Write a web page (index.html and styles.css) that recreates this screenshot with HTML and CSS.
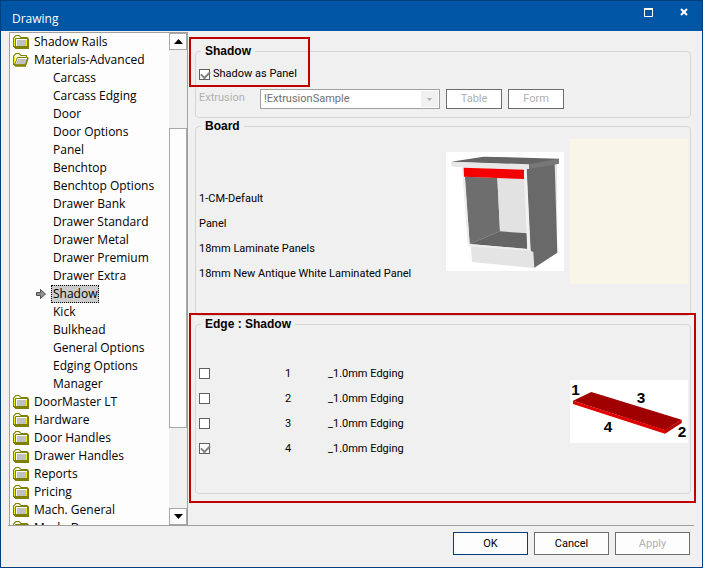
FILE: index.html
```html
<!DOCTYPE html>
<html lang="en">
<head>
<meta charset="utf-8">
<title>Drawing</title>
<link rel="stylesheet" href="styles.css">
</head>
<body>
<svg class="defs" aria-hidden="true">
  <symbol id="folder" viewBox="0 0 17 14">
    <path d="M1 12V3L3 1H6L8 3H14V12Z" fill="#f4f4d8"/>
    <path d="M1.500 4V11" stroke="#f0f000"/>
    <path d="M.5 12V2.500H1.500V1.500H2.500V.5H6.500V1.500H7.500V2.500H14.500V3.500" fill="none" stroke="#808000"/>
    <path d="M2.500 12V3.500H15.500V12" fill="#fff" stroke="#808000"/>
    <path d="M4 5H13V11H4Z" fill="#c0c0c0"/>
    <path d="M13.500 5V11" stroke="#f0f000"/>
    <path d="M1 12H16M2 13H16M15 4V13" stroke="#808000" stroke-width="2"/>
  </symbol>
  <symbol id="folder-open" viewBox="0 0 17 14">
    <path d="M1 12V3L3 1H6L8 3H13V12Z" fill="#f4f4d8"/>
    <path d="M1.500 4V11" stroke="#f0f000"/>
    <path d="M.5 12V2.500H1.500V1.500H2.500V.5H6.500V1.500H7.500V2.500H13.500V5" fill="none" stroke="#808000"/>
    <path d="M1.500 12L4.500 4.500H15L12.500 12Z" fill="#fff" stroke="#808000"/>
    <path d="M5 6H14L12 11H3Z" fill="#c0c0c0"/>
    <path d="M1 12H13M2 13H13M15 5L12.500 12" stroke="#808000" stroke-width="1.500"/>
  </symbol>
</svg>
<div class="window">
  <header class="titlebar">
    <h1>Drawing</h1>
    <button class="caption" aria-label="Maximize"><svg width="9" height="9"><path d="M.5 1H8.500V8.500H.5Z" fill="none" stroke="#fff"/><path d="M0 1H9" stroke="#fff" stroke-width="2"/></svg></button>
    <button class="caption" aria-label="Close"><svg width="8" height="8"><path d="M1 1L7 7M7 1L1 7" stroke="#fff" stroke-width="2"/></svg></button>
  </header>
  <div class="content">
    <nav class="tree">
      <ul>
        <li class="folder"><svg><use href="#folder"/></svg>Shadow Rails</li>
        <li class="folder"><svg><use href="#folder-open"/></svg>Materials-Advanced</li>
        <li class="leaf">Carcass</li>
        <li class="leaf">Carcass Edging</li>
        <li class="leaf">Door</li>
        <li class="leaf">Door Options</li>
        <li class="leaf">Panel</li>
        <li class="leaf">Benchtop</li>
        <li class="leaf">Benchtop Options</li>
        <li class="leaf">Drawer Bank</li>
        <li class="leaf">Drawer Standard</li>
        <li class="leaf">Drawer Metal</li>
        <li class="leaf">Drawer Premium</li>
        <li class="leaf">Drawer Extra</li>
        <li class="leaf current"><svg class="arrow" viewBox="0 0 10 10"><path d="M.5 3.500H4.500V.5L9.500 5L4.500 9.500V6.500H.5Z" fill="#909090" stroke="#505050"/></svg><span class="selected">Shadow</span></li>
        <li class="leaf">Kick</li>
        <li class="leaf">Bulkhead</li>
        <li class="leaf">General Options</li>
        <li class="leaf">Edging Options</li>
        <li class="leaf">Manager</li>
        <li class="folder"><svg><use href="#folder"/></svg>DoorMaster LT</li>
        <li class="folder"><svg><use href="#folder"/></svg>Hardware</li>
        <li class="folder"><svg><use href="#folder"/></svg>Door Handles</li>
        <li class="folder"><svg><use href="#folder"/></svg>Drawer Handles</li>
        <li class="folder"><svg><use href="#folder"/></svg>Reports</li>
        <li class="folder"><svg><use href="#folder"/></svg>Pricing</li>
        <li class="folder"><svg><use href="#folder"/></svg>Mach. General</li>
        <li class="folder"><svg><use href="#folder"/></svg>Mach. Door</li>
      </ul>
      <div class="scrollbar">
        <button aria-label="Scroll up"><svg width="9" height="5"><path d="M0 5L4.500 0L9 5Z"/></svg></button>
        <div class="track"><div class="thumb"></div></div>
        <button aria-label="Scroll down"><svg width="9" height="5"><path d="M0 0L4.500 5L9 0Z"/></svg></button>
      </div>
    </nav>
    <main class="panels">
      <fieldset class="group">
        <legend>Shadow</legend>
        <label class="check"><input type="checkbox" checked>Shadow as Panel</label>
        <div class="extrusion">
          <label for="extrusion">Extrusion</label>
          <div class="combo">
            <select id="extrusion" disabled><option>!ExtrusionSample</option></select>
            <span class="drop"><svg width="5" height="3"><path d="M0 0H5L2.500 3Z" fill="#b0b0b0"/></svg></span>
          </div>
          <button class="small" disabled>Table</button>
          <button class="small" disabled>Form</button>
        </div>
        <div class="mark mark-option"></div>
      </fieldset>
      <fieldset class="group board">
        <legend>Board</legend>
        <div class="columns">
          <div class="lines">
            <p>1-CM-Default</p>
            <p>Panel</p>
            <p>18mm Laminate Panels</p>
            <p>18mm New Antique White Laminated Panel</p>
          </div>
          <svg class="cabinet" viewBox="33 36 354 357" role="img" aria-label="Cabinet">
            <path d="M33 36H387V393H33Z" fill="#fff"/>
            <path d="M82 80L275 84L366 70L367 338L297 384L111 366L108 320L99 318Z" fill="#e4e4e4"/>
            <path d="M274 84L359 70L367 338L298 383L295 336L286 332Z" fill="#696969"/>
            <path d="M90 110L187 114L195 274L104 312Z" fill="#6e6e6e"/>
            <path d="M187 114L270 117L277 280L195 274Z" fill="#e2e2e2"/>
            <path d="M195 274L277 280V327L104 312Z" fill="#656565"/>
            <path d="M266 86L275 86L287 334L277 331Z" fill="#f2f2f2"/>
            <path d="M81 82L87 82L104 312L277 327V332L99 319Z" fill="#eee"/>
            <path d="M86 83L267 89V117L87 110Z" fill="#f50000"/>
            <path d="M48 65L146 50L372 56L371 60L282 75Z" fill="#646464"/>
            <path d="M282 73L372 56V71L282 87Z" fill="#777"/>
            <path d="M48 65L282 73V87L49 80Z" fill="#e8e8e8"/>
          </svg>
          <div class="swatch"></div>
        </div>
      </fieldset>
      <fieldset class="group edge">
        <legend>Edge : Shadow</legend>
        <div class="columns">
          <div class="edges">
            <label class="row"><input type="checkbox"><span>1</span><span>_1.0mm Edging</span></label>
            <label class="row"><input type="checkbox"><span>2</span><span>_1.0mm Edging</span></label>
            <label class="row"><input type="checkbox"><span>3</span><span>_1.0mm Edging</span></label>
            <label class="row"><input type="checkbox" checked><span>4</span><span>_1.0mm Edging</span></label>
          </div>
          <svg class="plank" viewBox="30 30 354 189" role="img" aria-label="Numbered panel edges">
            <path d="M30 30H384V219H30Z" fill="#fff"/>
            <path d="M39 92L94 66L365 149L315 181Z" fill="#a00000"/>
            <path d="M39 92L315 180V191L39 102Z" fill="#e00000"/>
            <path d="M315 180L365 149V159L315 191Z" fill="#b80000"/>
            <g class="digits"><text x="34" y="75">1</text><text x="353" y="202">2</text><text x="230" y="98">3</text><text x="131" y="185">4</text></g>
          </svg>
        </div>
        <div class="mark mark-edge"></div>
      </fieldset>
    </main>
  </div>
  <footer class="actions">
    <button class="primary">OK</button>
    <button>Cancel</button>
    <button disabled>Apply</button>
  </footer>
</div>
</body>
</html>
```
FILE: styles.css
```css
* { box-sizing: border-box; }
body { margin: 0; font: 12px/16px "Open Sans", "Noto Sans", sans-serif; color: #000; }
button { font: inherit; padding: 0; }
.defs { position: absolute; width: 0; height: 0; }
.window { display: flex; flex-direction: column; height: 100vh; background: #f0f0f0; border: 1px solid #003f7d; }
.titlebar { flex: none; display: flex; align-items: center; height: 30px; padding: 0 8px 0 11px; background: #0055a5; color: #fff; }
.titlebar h1 { flex: 1; margin: 0; padding-top: 6px; font-size: 12px; font-weight: 400; }
.caption { display: flex; align-items: center; justify-content: center; width: 20px; height: 20px; margin: 0 0 8px 16px; border: 0; background: none; }
.content { flex: 1; min-height: 0; display: flex; gap: 7px; padding-right: 11px; }
.tree { flex: none; display: flex; width: 179px; margin: 1px 0 0 8px; border: 1px solid #a0a0a0; border-bottom: 0; background: #fdfdfd; overflow: hidden; }
.tree ul { flex: 1; margin: 0; padding: 0; list-style: none; }
.tree li { display: flex; align-items: center; height: 18px; white-space: nowrap; }
.folder { gap: 4px; padding-left: 3px; }
.folder svg { width: 17px; height: 14px; }
.leaf { padding-left: 43px; }
.current { padding-left: 26px; gap: 5px; }
.arrow { width: 10px; height: 10px; }
.selected { padding: 0 1px; border: 1px dotted #000; background: #ccc; }
.scrollbar { display: flex; flex-direction: column; width: 18px; background: #f0f0f0; }
.scrollbar button { display: flex; align-items: center; justify-content: center; height: 17px; border: 1px solid #a8a8a8; background: #fdfdfd; }
.track { flex: 1; padding-top: 78px; }
.thumb { height: 79%; border: 1px solid #a8a8a8; background: #fdfdfd; }
.panels { flex: 1; min-width: 0; padding-top: 12px; font-family: Roboto, "Liberation Sans", sans-serif; font-size: 11px; }
.group { position: relative; min-width: 0; margin: 0; padding: 0 2px 8px 3px; border: 1px solid #d5d5d5; border-radius: 4px; }
legend { margin-left: 2px; padding: 0 4px; font: 700 12px/16px "Liberation Sans", sans-serif; }
.check { display: flex; align-items: center; gap: 3px; height: 16px; margin-top: 7px; }
input { appearance: none; flex: none; width: 11px; height: 11px; margin: 0; border: 1px solid #606060; background: #fff; }
input:checked::before { content: ""; display: block; width: 7px; height: 4px; margin: 1px; border: solid #808080; border-width: 0 0 2px 2px; transform: rotate(-45deg); }
.extrusion { display: flex; gap: 6px; height: 20px; margin-top: 7px; line-height: 18px; color: #b0b0b0; }
.extrusion label { width: 55px; }
.combo { position: relative; width: 180px; }
select { appearance: none; width: 100%; height: 20px; padding: 0 3px; border: 1px solid #a0a0a0; border-radius: 0; background: #fff; color: #707070; font: inherit; opacity: 1; }
.drop { position: absolute; top: 2px; right: 2px; display: flex; align-items: center; justify-content: center; width: 17px; height: 16px; background: #f0f0f0; }
.small { width: 56px; border: 1px solid #6c6c6c; background: #fff; color: #b0b0b0; }
.board { padding-bottom: 29px; }
.columns { display: flex; gap: 6px; }
.lines { flex: 1; padding-top: 52px; }
.lines p { margin: 0; line-height: 25px; }
.cabinet { flex: none; width: 118px; height: 119px; margin-top: 18px; }
.swatch { width: 118px; height: 145px; margin-top: 5px; background: #f9f6e8; }
.edge { padding-bottom: 32px; }
.edge .columns { padding-top: 29px; }
.edges { flex: 1; }
.row { display: grid; grid-template-columns: 86px 43px 1fr; align-items: center; height: 25px; }
.plank { width: 118px; height: 63px; margin-top: 19px; }
.digits { font: 700 46px "Liberation Sans", sans-serif; }
.mark { position: absolute; border: 2px solid #c00000; pointer-events: none; }
.mark-option { top: -22px; left: -7px; width: 121px; height: 50px; }
.mark-edge { inset: -19px -6px -10px -7px; }
.actions { flex: none; display: flex; justify-content: flex-end; gap: 6px; height: 42px; margin: 0 8px 0 7px; padding: 6px 4px 0 0; border-top: 1px solid #a0a0a0; }
.actions button { width: 75px; height: 23px; border: 1px solid #6c6c6c; background: #fdfdfd; color: #000; font-family: Roboto, "Liberation Sans", sans-serif; font-size: 11px; }
.actions .primary { border-color: #003f7d; }
.actions button:disabled { color: #b0b0b0; }
```
